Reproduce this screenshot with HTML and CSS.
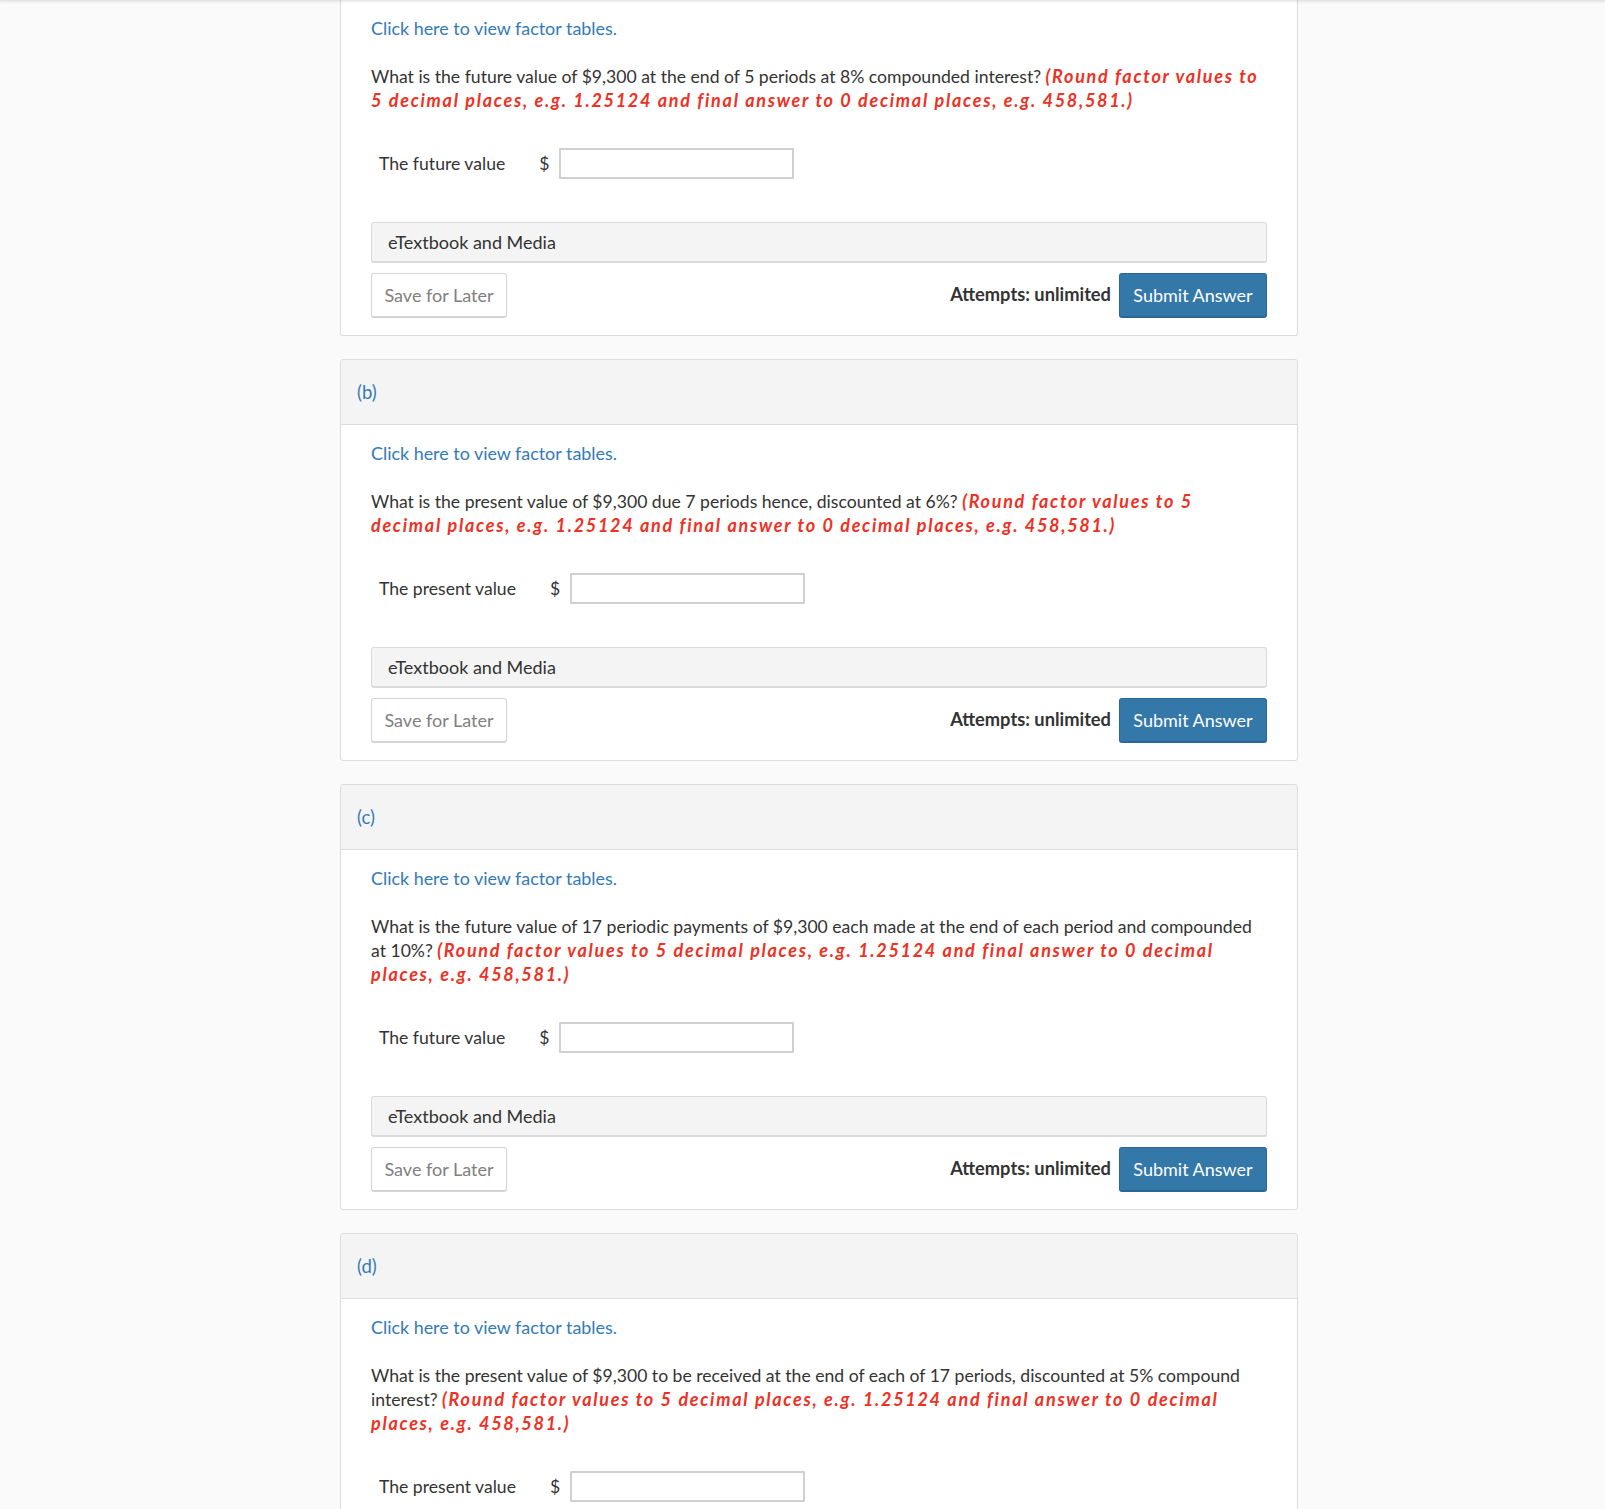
FILE: index.html
```html
<!DOCTYPE html>
<html lang="en">
<head>
<meta charset="utf-8">
<title>Questions</title>
<link rel="stylesheet" href="styles.css">
</head>
<body>
<div class="top-shadow"></div>
<main class="container">

  <section class="card card-first">
    <div class="card-body">
      <p class="factor"><a href="#">Click here to view factor tables.</a></p>
      <p class="question">What is the future value of $9,300 at the end of 5 periods at 8% compounded interest? <span class="hint">(Round factor values to 5 decimal places, e.g. 1.25124 and final answer to 0 decimal places, e.g. 458,581.)</span></p>
      <div class="answer-row">
        <span class="answer-label">The future value</span>
        <span class="dollar">$</span>
        <input class="answer-input" type="text">
      </div>
      <div class="etext">eTextbook and Media</div>
      <div class="actions">
        <button class="btn btn-save">Save for Later</button>
        <div class="actions-right">
          <span class="attempts">Attempts: unlimited</span>
          <button class="btn btn-submit">Submit Answer</button>
        </div>
      </div>
    </div>
  </section>

  <section class="card">
    <header class="card-header">(b)</header>
    <div class="card-body">
      <p class="factor"><a href="#">Click here to view factor tables.</a></p>
      <p class="question">What is the present value of $9,300 due 7 periods hence, discounted at 6%? <span class="hint">(Round factor values to 5 decimal places, e.g. 1.25124 and final answer to 0 decimal places, e.g. 458,581.)</span></p>
      <div class="answer-row">
        <span class="answer-label">The present value</span>
        <span class="dollar">$</span>
        <input class="answer-input" type="text">
      </div>
      <div class="etext">eTextbook and Media</div>
      <div class="actions">
        <button class="btn btn-save">Save for Later</button>
        <div class="actions-right">
          <span class="attempts">Attempts: unlimited</span>
          <button class="btn btn-submit">Submit Answer</button>
        </div>
      </div>
    </div>
  </section>

  <section class="card">
    <header class="card-header">(c)</header>
    <div class="card-body">
      <p class="factor"><a href="#">Click here to view factor tables.</a></p>
      <p class="question">What is the future value of 17 periodic payments of $9,300 each made at the end of each period and compounded at 10%? <span class="hint">(Round factor values to 5 decimal places, e.g. 1.25124 and final answer to 0 decimal places, e.g. 458,581.)</span></p>
      <div class="answer-row">
        <span class="answer-label">The future value</span>
        <span class="dollar">$</span>
        <input class="answer-input" type="text">
      </div>
      <div class="etext">eTextbook and Media</div>
      <div class="actions">
        <button class="btn btn-save">Save for Later</button>
        <div class="actions-right">
          <span class="attempts">Attempts: unlimited</span>
          <button class="btn btn-submit">Submit Answer</button>
        </div>
      </div>
    </div>
  </section>

  <section class="card">
    <header class="card-header">(d)</header>
    <div class="card-body">
      <p class="factor"><a href="#">Click here to view factor tables.</a></p>
      <p class="question">What is the present value of $9,300 to be received at the end of each of 17 periods, discounted at 5% compound interest? <span class="hint">(Round factor values to 5 decimal places, e.g. 1.25124 and final answer to 0 decimal places, e.g. 458,581.)</span></p>
      <div class="answer-row">
        <span class="answer-label">The present value</span>
        <span class="dollar">$</span>
        <input class="answer-input" type="text">
      </div>
      <div class="etext">eTextbook and Media</div>
      <div class="actions">
        <button class="btn btn-save">Save for Later</button>
        <div class="actions-right">
          <span class="attempts">Attempts: unlimited</span>
          <button class="btn btn-submit">Submit Answer</button>
        </div>
      </div>
    </div>
  </section>

</main>
</body>
</html>
```
FILE: styles.css
```css
html, body {
  margin: 0;
  padding: 0;
}
body {
  background: #fafafa;
  font-family: Lato, "Open Sans", Arial, sans-serif;
  font-size: 17.6px;
  line-height: 24px;
  color: #333;
  overflow: hidden;
}
.top-shadow {
  position: fixed;
  top: 0;
  left: 0;
  right: 0;
  height: 0;
  box-shadow: 0 0 3px 1px rgba(0, 0, 0, 0.18);
  z-index: 5;
}
.container {
  width: 958px;
  margin: 0 0 0 340px;
}
.card {
  background: #fff;
  border: 1px solid #dcdcdc;
  border-radius: 3px;
  margin-bottom: 23px;
  overflow: hidden;
}
.card-first {
  border-top: none;
  border-top-left-radius: 0;
  border-top-right-radius: 0;
}
.card-header {
  background: #f4f4f4;
  border-bottom: 1px solid #dcdcdc;
  padding: 0 16px;
  height: 64px;
  line-height: 64px;
  color: #337ab7;
  font-size: 18.5px;
}
.card-body {
  padding: 16px 30px 17px 30px;
}
.factor {
  margin: 0 0 25px 0;
  font-size: 17.9px;
  line-height: 24px;
}
.factor a {
  color: #337ab7;
  text-decoration: none;
}
.question {
  margin: 0;
  line-height: 24px;
}
.hint {
  color: #ee3124;
  font-weight: 700;
  font-style: italic;
  font-size: 18px;
  line-height: 18px;
  letter-spacing: 1.7px;
}
.answer-row {
  display: flex;
  align-items: center;
  margin: 35px 0 0 8px;
  height: 31px;
}
.answer-label {
  margin-right: 34px;
}
.dollar {
  margin-right: 10px;
}
.answer-input {
  width: 235px;
  height: 31px;
  box-sizing: border-box;
  border: 2px solid #d0d0d0;
  border-radius: 1px;
  background: #fff;
  padding: 0 6px;
  font: inherit;
}
.etext {
  margin-top: 43px;
  height: 41px;
  box-sizing: border-box;
  line-height: 39px;
  background: #f4f4f4;
  border: 1px solid #dadada;
  border-bottom-width: 2px;
  border-radius: 3px;
  padding: 0 16px;
  color: #333;
  font-size: 18px;
}
.actions {
  margin-top: 10px;
  display: flex;
  justify-content: space-between;
  align-items: center;
}
.actions-right {
  display: flex;
  align-items: center;
  gap: 8px;
}
.attempts {
  font-weight: 700;
  font-size: 18.3px;
  color: #333;
  margin-top: -3px;
}
.btn {
  height: 45px;
  box-sizing: border-box;
  border-radius: 3px;
  font-family: Lato, "Open Sans", Arial, sans-serif;
  font-size: 18px;
  padding: 0 10px;
  cursor: pointer;
  white-space: nowrap;
}
.btn-save {
  width: 136px;
  background: #fff;
  border: 1px solid #d4d4d4;
  border-bottom-width: 2px;
  color: #808080;
}
.btn-submit {
  width: 148px;
  background: #3478a9;
  border: 1px solid #2b6694;
  border-bottom-width: 2px;
  color: #fff;
}
```
